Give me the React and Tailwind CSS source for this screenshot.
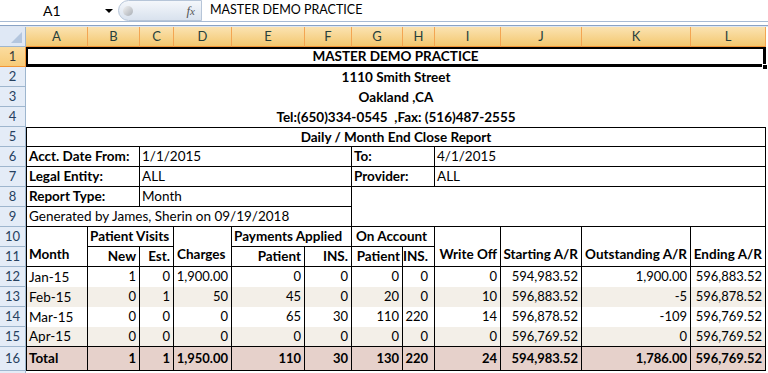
import clsx from 'clsx';

const font = { fontFamily: 'Lato, "Liberation Sans", sans-serif' };

const colStart = [
  'col-start-2', 'col-start-3', 'col-start-4', 'col-start-5', 'col-start-6', 'col-start-7',
  'col-start-8', 'col-start-9', 'col-start-10', 'col-start-11', 'col-start-12', 'col-start-13',
];
// rowStart[n] is the grid row of sheet row n (grid row 1 holds the column letters)
const rowStart = [
  'row-start-1', 'row-start-2', 'row-start-3', 'row-start-4', 'row-start-5', 'row-start-6',
  'row-start-7', 'row-start-8', 'row-start-9', 'row-start-10', 'row-start-11', 'row-start-12',
  'row-start-13', 'row-start-14', 'row-start-15', 'row-start-16', 'row-start-17', 'row-start-18',
];

const letters = ['A', 'B', 'C', 'D', 'E', 'F', 'G', 'H', 'I', 'J', 'K', 'L'];

const dataRows = [
  { row: 12, bg: 'bg-white', values: ['Jan-15', '1', '0', '1,900.00', '0', '0', '0', '0', '0', '594,983.52', '1,900.00', '596,883.52'] },
  { row: 13, bg: 'bg-[#f3efe8]', values: ['Feb-15', '0', '1', '50', '45', '0', '20', '0', '10', '596,883.52', '-5', '596,878.52'] },
  { row: 14, bg: 'bg-white', values: ['Mar-15', '0', '0', '0', '65', '30', '110', '220', '14', '596,878.52', '-109', '596,769.52'] },
  { row: 15, bg: 'bg-[#f3efe8]', values: ['Apr-15', '0', '0', '0', '0', '0', '0', '0', '0', '596,769.52', '0', '596,769.52'] },
  { row: 16, bg: 'bg-[#e6d1cb]', bold: true, values: ['Total', '1', '1', '1,950.00', '110', '30', '130', '220', '24', '594,983.52', '1,786.00', '596,769.52'] },
];

function Cell({ className, children }) {
  return (
    <div className={clsx('flex min-w-0 overflow-hidden whitespace-nowrap border-black', className)}>
      {children}
    </div>
  );
}

function FormulaBar() {
  return (
    <div className="flex h-[21px] bg-white">
      <div className="relative flex w-[118px] items-center">
        <span className="pl-[43px] text-[14px] text-black">A1</span>
        <span className="absolute left-[105px] top-[9px] h-0 w-0 border-x-[4px] border-t-[4px] border-x-transparent border-t-black" />
      </div>
      <div className="relative flex h-[21px] w-[84px] items-center rounded-l-full border border-[#b6c5d8] bg-gradient-to-b from-[#f4f7fb] to-[#d9e2ee]">
        <span className="ml-[4px] h-[10px] w-[10px] rounded-full bg-gradient-to-br from-[#f2f2f2] to-[#a9aeb5]" />
        <span className="ml-auto mr-[6px] text-[13px] italic text-[#555]" style={{ fontFamily: '"Liberation Serif", serif' }}>
          f<span className="text-[11px]">x</span>
        </span>
      </div>
      <div className="flex flex-1 items-center pl-[8px] text-[12.5px] text-black">MASTER DEMO PRACTICE</div>
    </div>
  );
}

export default function App() {
  return (
    <div className="h-[373px] w-[768px] overflow-hidden bg-white text-[13.5px] text-black" style={font}>
      <FormulaBar />
      <div className="h-[1px] bg-[#a7bad3]" />
      <div className="h-[3px] bg-white" />
      <div className="h-[1px] bg-[#8aa3c5]" />
      <div className="h-[1px] bg-[#dfe7f2]" />

      <div className="grid grid-cols-[26px_62px_52px_34px_58px_73px_47px_51px_32px_66px_81px_109px_75px] grid-rows-[20px_repeat(15,20px)_24px_20px]">
        {/* corner */}
        <div className="relative col-start-1 row-start-1 border-b border-r border-[#9eb6ce] bg-[#dfe8f5]">
          <span className="absolute bottom-[3px] right-[3px] h-0 w-0 border-b-[11px] border-l-[11px] border-b-[#b4c6de] border-l-transparent" />
        </div>
        {/* column letters, all highlighted because A1:L1 is selected */}
        {letters.map((l, i) => (
          <div
            key={l}
            className={clsx(
              colStart[i],
              'row-start-1 flex items-center justify-center border-b border-r border-b-[#f29536] border-r-[#f3a552] bg-gradient-to-b from-[#fbe3b1] to-[#f3c76e] text-[13px] text-[#273f3c]',
            )}
          >
            {l}
          </div>
        ))}

        {/* row numbers */}
        {Array.from({ length: 17 }, (_, i) => i + 1).map((n) => (
          <div
            key={n}
            className={clsx(
              rowStart[n],
              'col-start-1 flex items-center justify-center border-b border-r text-[13px]',
              n === 1
                ? 'border-[#f29536] bg-gradient-to-b from-[#fbdc9f] to-[#f7cb78] text-[#3a3a3a]'
                : 'border-[#9eb6ce] bg-[#e4ecf7] text-[#27415f]',
            )}
          >
            {n < 17 ? n : ''}
          </div>
        ))}

        {/* header block */}
        <Cell className="col-start-2 col-span-12 row-start-2 items-center justify-center border-l-2 border-t-2 border-b-[3px] border-r-[3px] font-bold">
          MASTER DEMO PRACTICE
        </Cell>
        <span className="relative col-start-13 row-start-2">
          <span className="absolute -bottom-[3px] -right-[2px] h-[6px] w-[6px] border border-white bg-black" />
        </span>
        <Cell className="col-start-2 col-span-12 row-start-3 items-center justify-center font-bold">1110 Smith Street</Cell>
        <Cell className="col-start-2 col-span-12 row-start-4 items-center justify-center font-bold">Oakland ,CA</Cell>
        <Cell className="col-start-2 col-span-12 row-start-5 items-center justify-center font-bold">
          Tel:(650)334-0545&nbsp;&nbsp;,Fax: (516)487-2555
        </Cell>
        <Cell className="col-start-2 col-span-12 row-start-6 items-center justify-center border font-bold">
          Daily / Month End Close Report
        </Cell>

        {/* criteria rows */}
        <Cell className="col-start-2 col-span-2 row-start-7 items-center border-b border-l border-r pl-[2px] font-bold">Acct. Date From:</Cell>
        <Cell className="col-start-4 col-span-4 row-start-7 items-center border-b border-r pl-[2px]">1/1/2015</Cell>
        <Cell className="col-start-8 col-span-2 row-start-7 items-center border-b border-r pl-[2px] font-bold">To:</Cell>
        <Cell className="col-start-10 col-span-4 row-start-7 items-center border-b border-r pl-[2px]">4/1/2015</Cell>

        <Cell className="col-start-2 col-span-2 row-start-8 items-center border-b border-l border-r pl-[2px] font-bold">Legal Entity:</Cell>
        <Cell className="col-start-4 col-span-4 row-start-8 items-center border-b border-r pl-[2px]">ALL</Cell>
        <Cell className="col-start-8 col-span-2 row-start-8 items-center border-b border-r pl-[2px] font-bold">Provider:</Cell>
        <Cell className="col-start-10 col-span-4 row-start-8 items-center border-b border-r pl-[2px]">ALL</Cell>

        <Cell className="col-start-2 col-span-2 row-start-9 items-center border-b border-l border-r pl-[2px] font-bold">Report Type:</Cell>
        <Cell className="col-start-4 col-span-4 row-start-9 items-center border-b border-r pl-[2px]">Month</Cell>
        <Cell className="col-start-8 col-span-6 row-start-9 row-span-2 border-b border-r" />
        <Cell className="col-start-2 col-span-6 row-start-10 items-center border-b border-l border-r pl-[2px]">
          Generated by James, Sherin on 09/19/2018
        </Cell>

        {/* table headings */}
        <Cell className="col-start-2 row-start-11 row-span-2 items-end border-b border-l border-r pb-[2px] pl-[2px] font-bold">Month</Cell>
        <Cell className="col-start-3 col-span-2 row-start-11 items-center border-b border-r pl-[2px] font-bold">Patient Visits</Cell>
        <Cell className="col-start-5 row-start-11 row-span-2 items-end border-b border-r pb-[2px] pl-[3px] font-bold">Charges</Cell>
        <Cell className="col-start-6 col-span-2 row-start-11 items-center border-b border-r pl-[2px] font-bold">Payments Applied</Cell>
        <Cell className="col-start-8 col-span-2 row-start-11 items-center border-b border-r pl-[4px] font-bold">On Account</Cell>
        <Cell className="col-start-10 row-start-11 row-span-2 items-end justify-end border-b border-r pb-[2px] pr-[3px] font-bold">Write Off</Cell>
        <Cell className="col-start-11 row-start-11 row-span-2 items-end justify-end border-b border-r pb-[2px] pr-[3px] font-bold">Starting A/R</Cell>
        <Cell className="col-start-12 row-start-11 row-span-2 items-end justify-end border-b border-r pb-[2px] pr-[3px] font-bold">Outstanding A/R</Cell>
        <Cell className="col-start-13 row-start-11 row-span-2 items-end justify-end border-b border-r pb-[2px] pr-[3px] font-bold">Ending A/R</Cell>

        <Cell className="col-start-3 row-start-12 items-center justify-end border-b border-r pr-[3px] font-bold">New</Cell>
        <Cell className="col-start-4 row-start-12 items-center justify-end border-b border-r pr-[3px] font-bold">Est.</Cell>
        <Cell className="col-start-6 row-start-12 items-center justify-end border-b border-r pr-[3px] font-bold">Patient</Cell>
        <Cell className="col-start-7 row-start-12 items-center justify-end border-b border-r pr-[3px] font-bold">INS.</Cell>
        <Cell className="col-start-8 row-start-12 items-center justify-end border-b border-r pr-[2px] font-bold">Patient</Cell>
        <Cell className="col-start-9 row-start-12 items-center justify-end border-b border-r pr-[6px] font-bold">INS.</Cell>

        {/* figures */}
        {dataRows.map((r) =>
          r.values.map((v, i) => (
            <Cell
              key={`${r.row}-${i}`}
              className={clsx(
                colStart[i],
                rowStart[r.row],
                r.bg,
                'items-center border-r',
                i === 0 ? 'justify-start border-l pl-[2px]' : 'justify-end text-[13px]',
                i === 7 ? 'pr-[6px]' : i > 0 && 'pr-[3px]',
                r.row >= 15 && 'border-b',
                r.bold && 'font-bold',
              )}
            >
              {v}
            </Cell>
          )),
        )}
      </div>
    </div>
  );
}
